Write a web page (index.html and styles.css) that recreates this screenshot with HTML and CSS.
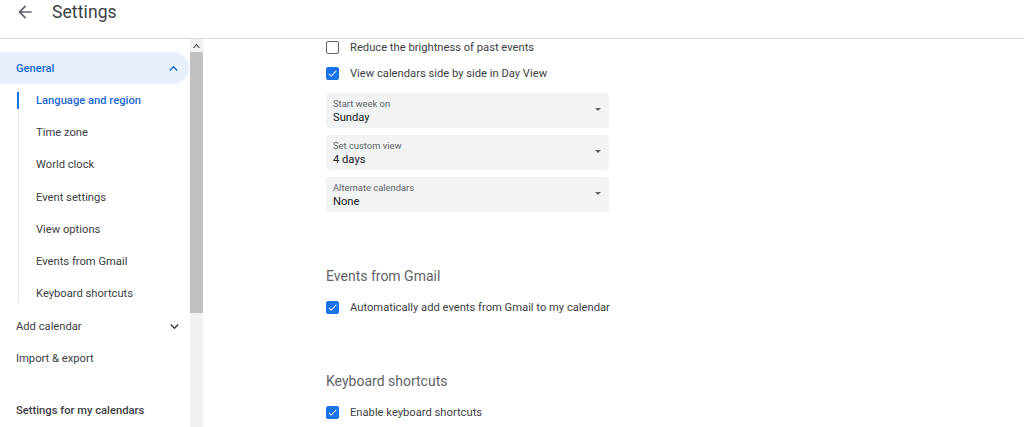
FILE: index.html
```html
<!DOCTYPE html>
<html>
<head>
<meta charset="utf-8">
<link rel="stylesheet" href="styles.css">
</head>
<body>
<header class="topbar">
  <svg class="back" width="20" height="20" viewBox="0 0 24 24"><path d="M20 11H7.83l5.59-5.59L12 4l-8 8 8 8 1.41-1.41L7.83 13H20v-2z" fill="#5f6368"/></svg>
  <span class="title">Settings</span>
</header>
<div class="main">
  <nav class="sidebar">
    <div class="nav-item active-group">
      <span>General</span>
      <svg class="chev" width="17" height="17" viewBox="0 0 24 24"><path d="M7.41 15.41L12 10.83l4.59 4.58L18 14l-6-6-6 6z" fill="#1967d2"/></svg>
    </div>
    <div class="sublist">
      <div class="sub-item current">Language and region</div>
      <div class="sub-item">Time zone</div>
      <div class="sub-item">World clock</div>
      <div class="sub-item">Event settings</div>
      <div class="sub-item">View options</div>
      <div class="sub-item">Events from Gmail</div>
      <div class="sub-item">Keyboard shortcuts</div>
    </div>
    <div class="nav-item">
      <span>Add calendar</span>
      <svg class="chev" width="17" height="17" viewBox="0 0 24 24"><path d="M7.41 8.59L12 13.17l4.59-4.58L18 10l-6 6-6-6z" fill="#3c4043"/></svg>
    </div>
    <div class="nav-item">Import &amp; export</div>
    <div class="nav-item section-title">Settings for my calendars</div>
  </nav>
  <div class="scrollbar">
    <div class="sb-btn"><svg width="7" height="5" viewBox="0 0 7 5"><path d="M0 5 L3.5 0.5 L7 5 L5.6 5 L3.5 2.3 L1.4 5Z" fill="#505050"/></svg></div>
    <div class="sb-thumb"></div>
    <div class="sb-track"></div>
  </div>
  <section class="content">
    <label class="check-row">
      <span class="box"></span>
      <span class="label">Reduce the brightness of past events</span>
    </label>
    <label class="check-row">
      <span class="box checked"><svg width="11" height="11" viewBox="0 0 24 24"><path d="M9 16.2L4.8 12l-1.4 1.4L9 19 21 7l-1.4-1.4L9 16.2z" fill="#fff"/></svg></span>
      <span class="label">View calendars side by side in Day View</span>
    </label>
    <div class="selects">
      <div class="select">
        <div class="sel-text"><div class="sel-label">Start week on</div><div class="sel-value">Sunday</div></div>
        <span class="caret"></span>
      </div>
      <div class="select">
        <div class="sel-text"><div class="sel-label">Set custom view</div><div class="sel-value">4 days</div></div>
        <span class="caret"></span>
      </div>
      <div class="select">
        <div class="sel-text"><div class="sel-label">Alternate calendars</div><div class="sel-value">None</div></div>
        <span class="caret"></span>
      </div>
    </div>
    <h2 class="heading">Events from Gmail</h2>
    <label class="check-row">
      <span class="box checked"><svg width="11" height="11" viewBox="0 0 24 24"><path d="M9 16.2L4.8 12l-1.4 1.4L9 19 21 7l-1.4-1.4L9 16.2z" fill="#fff"/></svg></span>
      <span class="label">Automatically add events from Gmail to my calendar</span>
    </label>
    <h2 class="heading second">Keyboard shortcuts</h2>
    <label class="check-row">
      <span class="box checked"><svg width="11" height="11" viewBox="0 0 24 24"><path d="M9 16.2L4.8 12l-1.4 1.4L9 19 21 7l-1.4-1.4L9 16.2z" fill="#fff"/></svg></span>
      <span class="label">Enable keyboard shortcuts</span>
    </label>
  </section>
</div>
</body>
</html>
```
FILE: styles.css
```css
* { box-sizing: border-box; }
html, body { margin: 0; padding: 0; }
body {
  width: 1024px;
  height: 427px;
  overflow: hidden;
  background: #fff;
  font-family: Roboto, "Liberation Sans", Arial, sans-serif;
  color: #3c4043;
}
.topbar {
  height: 39px;
  border-bottom: 1px solid #dadce0;
  display: flex;
  align-items: center;
  padding-left: 15px;
  padding-bottom: 14px;
}
.back { display: block; }
.title {
  margin-left: 17px;
  font-size: 17.5px;
  color: #3c4043;
  letter-spacing: 0.1px;
}
.main {
  display: flex;
  height: 388px;
}
.sidebar {
  width: 190px;
  padding-top: 13px;
  font-size: 11.2px;
}
.nav-item {
  height: 32.25px;
  display: flex;
  align-items: center;
  justify-content: space-between;
  padding-left: 16px;
  padding-right: 7px;
  color: #3c4043;
}
.active-group {
  background: #e8f0fe;
  border-radius: 0 16px 16px 0;
  color: #1967d2;
  font-weight: 500;
  margin-right: 1px;
}
.chev { display: block; }
.sublist {
  position: relative;
  margin-left: 18px;
}
.sublist::before {
  content: "";
  position: absolute;
  left: 0;
  top: 4px;
  bottom: 8px;
  width: 1px;
  background: #e3e3f0;
}
.sub-item {
  position: relative;
  height: 32.25px;
  display: flex;
  align-items: center;
  padding-left: 18px;
  color: #3c4043;
}
.sub-item.current {
  color: #1967d2;
  font-weight: 500;
}
.sub-item.current::before {
  content: "";
  position: absolute;
  left: -1px;
  top: 8px;
  bottom: 8px;
  width: 2px;
  background: #1a73e8;
}
.section-title {
  margin-top: 20px;
  font-weight: 500;
}
.scrollbar {
  width: 13px;
  display: flex;
  flex-direction: column;
  background: #f1f1f1;
}
.sb-btn {
  height: 13px;
  display: flex;
  align-items: center;
  justify-content: center;
}
.sb-thumb {
  height: 261px;
  background: #c1c1c1;
}
.sb-track { flex: 1; }
.content {
  flex: 1;
  padding-left: 123px;
  font-size: 11.2px;
}
.check-row {
  display: flex;
  align-items: center;
  height: 16px;
  margin-bottom: 10px;
}
.box {
  width: 13px;
  height: 13px;
  border: 1.6px solid #5f6368;
  border-radius: 2px;
  display: flex;
  align-items: center;
  justify-content: center;
  flex: none;
}
.box.checked {
  background: #1a73e8;
  border-color: #1a73e8;
}
.label {
  margin-left: 11px;
  color: #3c4043;
}
.selects {
  margin-top: 12px;
  display: flex;
  flex-direction: column;
  gap: 7px;
}
.select {
  width: 283px;
  height: 35px;
  background: #f1f3f4;
  border-radius: 4px;
  display: flex;
  align-items: center;
  justify-content: space-between;
  padding: 0 8px 0 7px;
}
.sel-text {
  align-self: flex-start;
  padding-top: 5px;
}
.sel-label {
  font-size: 9.4px;
  color: #5f6368;
  line-height: 11px;
}
.sel-value {
  font-size: 11.2px;
  color: #202124;
  line-height: 14px;
  margin-top: 2px;
}
.caret {
  width: 0;
  height: 0;
  border-left: 3.5px solid transparent;
  border-right: 3.5px solid transparent;
  border-top: 3.5px solid #5f6368;
  margin-bottom: 2px;
}
.heading {
  margin: 54px 0 13px;
  font-size: 14px;
  font-weight: 400;
  line-height: 20px;
  color: #5f6368;
}
.heading.second {
  margin-top: 56px;
}
```
